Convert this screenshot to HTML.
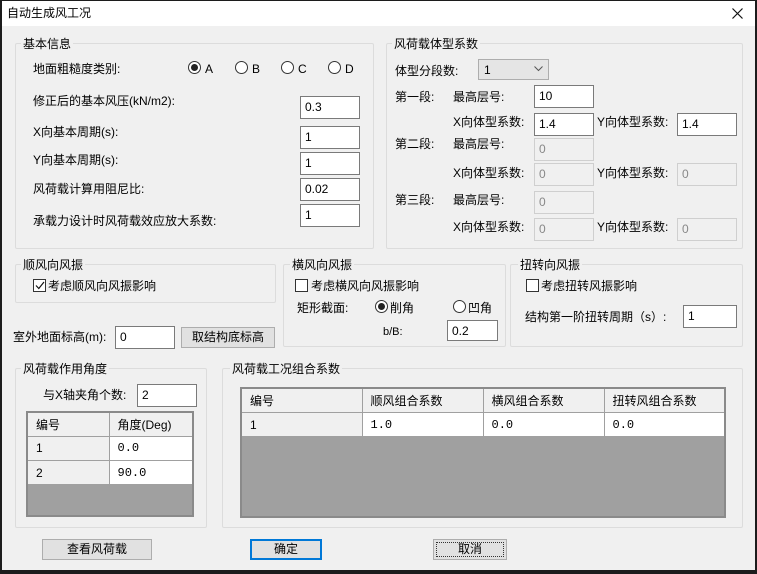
<!DOCTYPE html>
<html><head><meta charset="utf-8">
<style>
*{margin:0;padding:0;box-sizing:border-box}
body{width:757px;height:574px;overflow:hidden;background:#1c1c1c;font-family:"Liberation Sans","Noto Sans CJK SC",sans-serif;font-size:12px;color:#000;position:relative}
#win{position:absolute;left:2px;top:1px;width:753px;height:569px;background:#f0f0f0}
#title{position:absolute;left:0;top:0;width:753px;height:25px;background:#fff}
.t{position:absolute;white-space:nowrap;line-height:14px}
.g{position:absolute;border:1px solid #dcdcdc;border-radius:2px}
.gl{position:absolute;background:#f0f0f0;padding:0 2px;line-height:14px;white-space:nowrap}
.in{position:absolute;background:#fff;border:1px solid #7a7a7a;padding:3px 0 0 4px;font-size:12px;line-height:14px}
.dis{background:#f0f0f0;border-color:#cfcfcf;color:#888}
.r{position:absolute;width:13px;height:13px;border:1px solid #333;border-radius:50%;background:#fff}
.r.on::after{content:"";position:absolute;left:2px;top:2px;width:7px;height:7px;border-radius:50%;background:#222}
.cb{position:absolute;width:13px;height:13px;border:1px solid #333;background:#fff}
.btn{position:absolute;background:#e1e1e1;border:1px solid #adadad;text-align:center;line-height:18px}
table{position:absolute;border-collapse:collapse;background:#a0a0a0;border:2px solid #8a8a8a}
td{border:1px solid #a0a0a0;height:24px;padding-left:8px;vertical-align:middle;font-size:12px}
.h td{background:#f0f0f0;border-color:#a0a0a0 #a0a0a0 #a0a0a0 #a0a0a0}
td.w{background:#fff}
td.rh{background:#f0f0f0}
.mono{font-family:"Liberation Mono","Noto Sans CJK SC",monospace}
</style></head><body>
<div id="win">
<div id="title"></div>
<div class="t" style="left:5px;top:5px">自动生成风工况</div>
<svg style="position:absolute;left:730px;top:7px" width="11" height="11"><path d="M0.5 0.5L10.5 10.5M10.5 0.5L0.5 10.5" stroke="#111" stroke-width="1.2"/></svg>

<!-- 基本信息 -->
<div class="g" style="left:13px;top:42px;width:359px;height:206px"></div>
<div class="gl" style="left:19px;top:36px">基本信息</div>
<div class="t" style="left:31px;top:61px">地面粗糙度类别:</div>
<div class="r on" style="left:186px;top:60px"></div><div class="t" style="left:203px;top:61px">A</div>
<div class="r" style="left:233px;top:60px"></div><div class="t" style="left:250px;top:61px">B</div>
<div class="r" style="left:279px;top:60px"></div><div class="t" style="left:296px;top:61px">C</div>
<div class="r" style="left:326px;top:60px"></div><div class="t" style="left:343px;top:61px">D</div>
<div class="t" style="left:31px;top:93px">修正后的基本风压(kN/m2):</div>
<div class="in" style="left:298px;top:95px;width:60px;height:23px">0.3</div>
<div class="t" style="left:31px;top:124px">X向基本周期(s):</div>
<div class="in" style="left:298px;top:125px;width:60px;height:23px">1</div>
<div class="t" style="left:31px;top:152px">Y向基本周期(s):</div>
<div class="in" style="left:298px;top:151px;width:60px;height:23px">1</div>
<div class="t" style="left:31px;top:181px">风荷载计算用阻尼比:</div>
<div class="in" style="left:298px;top:177px;width:60px;height:23px">0.02</div>
<div class="t" style="left:31px;top:213px">承载力设计时风荷载效应放大系数:</div>
<div class="in" style="left:298px;top:203px;width:60px;height:23px">1</div>

<!-- 体型系数 -->
<div class="g" style="left:384px;top:42px;width:357px;height:206px"></div>
<div class="gl" style="left:390px;top:36px">风荷载体型系数</div>
<div class="t" style="left:393px;top:63px">体型分段数:</div>
<div style="position:absolute;left:476px;top:58px;width:71px;height:21px;background:#e5e5e5;border:1px solid #adadad"></div>
<div class="t" style="left:482px;top:62px">1</div>
<svg style="position:absolute;left:532px;top:65px" width="9" height="6"><path d="M0.5 0.5L4.5 4.5L8.5 0.5" stroke="#555" fill="none"/></svg>
<div class="t" style="left:393px;top:89px">第一段:</div>
<div class="t" style="left:451px;top:89px">最高层号:</div>
<div class="in" style="left:532px;top:84px;width:60px;height:23px">10</div>
<div class="t" style="left:451px;top:114px">X向体型系数:</div>
<div class="in" style="left:532px;top:112px;width:60px;height:23px">1.4</div>
<div class="t" style="left:595px;top:114px">Y向体型系数:</div>
<div class="in" style="left:675px;top:112px;width:60px;height:23px">1.4</div>
<div class="t" style="left:393px;top:136px">第二段:</div>
<div class="t" style="left:451px;top:136px">最高层号:</div>
<div class="in dis" style="left:532px;top:137px;width:60px;height:23px">0</div>
<div class="t" style="left:451px;top:165px">X向体型系数:</div>
<div class="in dis" style="left:532px;top:162px;width:60px;height:23px">0</div>
<div class="t" style="left:595px;top:165px">Y向体型系数:</div>
<div class="in dis" style="left:675px;top:162px;width:60px;height:23px">0</div>
<div class="t" style="left:393px;top:192px">第三段:</div>
<div class="t" style="left:451px;top:192px">最高层号:</div>
<div class="in dis" style="left:532px;top:190px;width:60px;height:23px">0</div>
<div class="t" style="left:451px;top:219px">X向体型系数:</div>
<div class="in dis" style="left:532px;top:217px;width:60px;height:23px">0</div>
<div class="t" style="left:595px;top:219px">Y向体型系数:</div>
<div class="in dis" style="left:675px;top:217px;width:60px;height:23px">0</div>

<!-- 顺风向 -->
<div class="g" style="left:13px;top:263px;width:261px;height:39px"></div>
<div class="gl" style="left:19px;top:257px">顺风向风振</div>
<div class="cb" style="left:31px;top:278px"></div>
<svg style="position:absolute;left:33px;top:280px" width="10" height="9"><path d="M1 4.5L3.8 7.5L9 1" stroke="#111" fill="none" stroke-width="1.2"/></svg>
<div class="t" style="left:46px;top:278px">考虑顺风向风振影响</div>

<!-- 横风向 -->
<div class="g" style="left:281px;top:263px;width:223px;height:83px"></div>
<div class="gl" style="left:288px;top:257px">横风向风振</div>
<div class="cb" style="left:293px;top:278px"></div>
<div class="t" style="left:309px;top:278px">考虑横风向风振影响</div>
<div class="t" style="left:295px;top:300px">矩形截面:</div>
<div class="r on" style="left:373px;top:299px"></div><div class="t" style="left:388px;top:300px">削角</div>
<div class="r" style="left:451px;top:299px"></div><div class="t" style="left:466px;top:300px">凹角</div>
<div class="t" style="left:381px;top:324px;font-size:11px">b/B:</div>
<div class="in" style="left:445px;top:319px;width:51px;height:21px">0.2</div>

<!-- 扭转 -->
<div class="g" style="left:508px;top:263px;width:233px;height:83px"></div>
<div class="gl" style="left:516px;top:257px">扭转向风振</div>
<div class="cb" style="left:524px;top:278px"></div>
<div class="t" style="left:539px;top:278px">考虑扭转风振影响</div>
<div class="t" style="left:523px;top:309px">结构第一阶扭转周期（s）:</div>
<div class="in" style="left:681px;top:304px;width:54px;height:23px">1</div>

<div class="t" style="left:11px;top:329px">室外地面标高(m):</div>
<div class="in" style="left:113px;top:325px;width:60px;height:23px">0</div>
<div class="btn" style="left:179px;top:326px;width:94px;height:21px">取结构底标高</div>

<!-- 角度 -->
<div class="g" style="left:13px;top:367px;width:192px;height:160px"></div>
<div class="gl" style="left:19px;top:361px">风荷载作用角度</div>
<div class="t" style="left:41px;top:387px">与X轴夹角个数:</div>
<div class="in" style="left:135px;top:383px;width:60px;height:23px">2</div>
<table style="left:24px;top:410px;width:168px;height:106px">
<tr class="h"><td style="width:82px">编号</td><td>角度(Deg)</td></tr>
<tr><td class="rh">1</td><td class="w mono">0.0</td></tr>
<tr><td class="rh">2</td><td class="w mono">90.0</td></tr>
<tr><td colspan="2" style="border:none;background:#a0a0a0;height:31px"></td></tr>
</table>

<!-- 组合 -->
<div class="g" style="left:220px;top:367px;width:521px;height:160px"></div>
<div class="gl" style="left:228px;top:361px">风荷载工况组合系数</div>
<table style="left:238px;top:386px;width:486px;height:131px">
<tr class="h"><td style="width:121px">编号</td><td style="width:121px">顺风组合系数</td><td style="width:121px">横风组合系数</td><td>扭转风组合系数</td></tr>
<tr><td class="rh">1</td><td class="w mono">1.0</td><td class="w mono">0.0</td><td class="w mono">0.0</td></tr>
<tr><td colspan="4" style="border:none;background:#a0a0a0;height:79px"></td></tr>
</table>

<div class="btn" style="left:40px;top:538px;width:110px;height:21px">查看风荷载</div>
<div class="btn" style="left:248px;top:538px;width:72px;height:21px;border:2px solid #0078d7;line-height:17px">确定</div>
<div class="btn" style="left:431px;top:538px;width:74px;height:21px;outline:1px dotted #333;outline-offset:-4px">取消</div>
</div>
</body></html>
